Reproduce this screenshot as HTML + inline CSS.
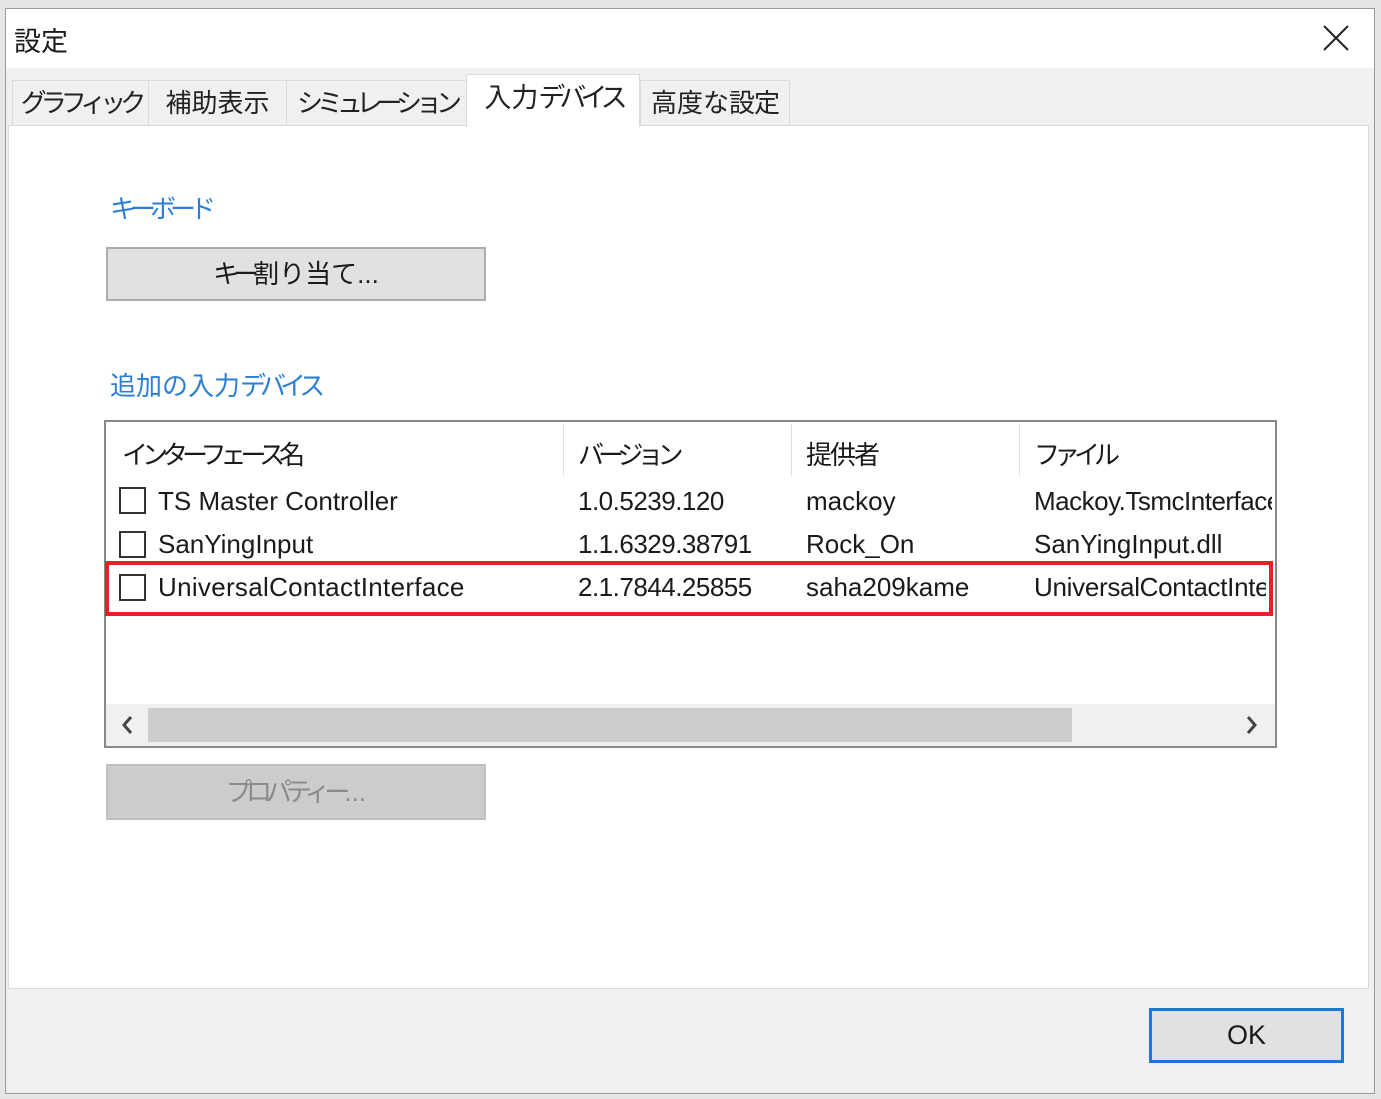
<!DOCTYPE html>
<html><head><meta charset="utf-8"><style>
*{margin:0;padding:0;box-sizing:border-box}
body{width:1381px;height:1099px;background:#e6e6e6;position:relative;overflow:hidden;font-family:"Liberation Sans","Noto Sans CJK JP",sans-serif;color:#1a1a1a}
.a{position:absolute}
.win{left:5px;top:8px;width:1370px;height:1086px;background:#f0f0f0;border:1px solid #9a9a9a}
.tab{position:absolute;top:80px;height:45px;background:#f0f0f0;border:1px solid #dadada;border-bottom:none;font-size:26px;text-align:center;line-height:44px;color:#222;white-space:nowrap}
.t{font-size:26px;white-space:nowrap}
.k{letter-spacing:-6px}
.cb{position:absolute;width:27px;height:27px;border:2px solid #333;background:#fff}
</style></head><body>
<div class="a win"></div>
<div class="a" style="left:6px;top:9px;width:1368px;height:59px;background:#fff"></div>
<div class="a t" style="left:14px;top:20px;font-size:27px">設定</div>
<svg class="a" style="left:1322px;top:24px" width="28" height="28"><path d="M2 2L26 26M26 2L2 26" stroke="#222" stroke-width="2"/></svg>
<div class="tab" style="left:12px;width:137px"><span class="k">グラフィック</span></div>
<div class="tab" style="left:148px;width:139px">補助表示</div>
<div class="tab" style="left:286px;width:181px"><span class="k">シミュレーション</span></div>
<div class="tab" style="left:640px;width:150px">高度な<span style="letter-spacing:-1px">設定</span></div>
<div class="a" style="left:8px;top:125px;width:1361px;height:864px;background:#fff;border:1px solid #dadada"></div>
<div class="tab" style="left:466px;top:74px;width:174px;height:53px;background:#fff;line-height:46px;font-size:27px">入力<span class="k">デバイス</span></div>
<div class="a t k" style="left:110px;top:189px;color:#2a7fd4">キーボード</div>
<div class="a" style="left:106px;top:247px;width:380px;height:54px;background:#e1e1e1;border:2px solid #adadad;text-align:center;line-height:50px;font-size:26px"><span class="k">キー</span>割り当て...</div>
<div class="a t" style="left:110px;top:366px;color:#2a7fd4">追加の入力<span class="k">デバイス</span></div>
<div class="a" style="left:104px;top:420px;width:1173px;height:328px;background:#fff;border:2px solid #888"></div>
<div class="a t" style="left:122px;top:435px"><span class="k">インターフェース</span>名</div>
<div class="a t k" style="left:578px;top:435px">バージョン</div>
<div class="a t" style="left:806px;top:435px;letter-spacing:-2px">提供者</div>
<div class="a t k" style="left:1034px;top:435px">ファイル</div>
<div class="a" style="left:563px;top:424px;width:1px;height:52px;background:#e0e0e0"></div>
<div class="a" style="left:791px;top:424px;width:1px;height:52px;background:#e0e0e0"></div>
<div class="a" style="left:1019px;top:424px;width:1px;height:52px;background:#e0e0e0"></div>
<div class="cb" style="left:119px;top:487px"></div>
<div class="cb" style="left:119px;top:531px"></div>
<div class="cb" style="left:119px;top:574px"></div>
<div class="a t" style="left:158px;top:486px">TS Master Controller</div>
<div class="a t" style="left:578px;top:486px;letter-spacing:-0.5px">1.0.5239.120</div>
<div class="a t" style="left:806px;top:486px">mackoy</div>
<div class="a" style="left:1034px;top:486px;width:238px;overflow:hidden"><span class="t" style="letter-spacing:-0.5px">Mackoy.TsmcInterface.dll</span></div>
<div class="a t" style="left:158px;top:529px">SanYingInput</div>
<div class="a t" style="left:578px;top:529px;letter-spacing:-0.5px">1.1.6329.38791</div>
<div class="a t" style="left:806px;top:529px">Rock_On</div>
<div class="a t" style="left:1034px;top:529px">SanYingInput.dll</div>
<div class="a t" style="left:158px;top:572px;letter-spacing:0.3px">UniversalContactInterface</div>
<div class="a t" style="left:578px;top:572px;letter-spacing:-0.5px">2.1.7844.25855</div>
<div class="a t" style="left:806px;top:572px">saha209kame</div>
<div class="a" style="left:1034px;top:572px;width:232px;overflow:hidden"><span class="t" style="letter-spacing:-0.3px">UniversalContactInterface.dll</span></div>
<div class="a" style="left:105px;top:561px;width:1168px;height:55px;border:4px solid #e8202a"></div>
<div class="a" style="left:106px;top:704px;width:1169px;height:42px;background:#f0f0f0"></div>
<div class="a" style="left:148px;top:708px;width:924px;height:34px;background:#cdcdcd"></div>
<svg class="a" style="left:118px;top:714px" width="20" height="22"><path d="M13 3L6 11L13 19" stroke="#444" stroke-width="3" fill="none"/></svg>
<svg class="a" style="left:1242px;top:714px" width="20" height="22"><path d="M6 3L13 11L6 19" stroke="#444" stroke-width="3" fill="none"/></svg>
<div class="a" style="left:106px;top:764px;width:380px;height:56px;background:#cccccc;border:2px solid #bfbfbf;text-align:center;line-height:52px;font-size:26px;color:#8a8a8a"><span class="k">プロパティー</span>...</div>
<div class="a" style="left:1149px;top:1008px;width:195px;height:55px;background:#e1e1e1;border:3px solid #1a78d4;text-align:center;line-height:49px;font-size:27px">OK</div>
</body></html>
